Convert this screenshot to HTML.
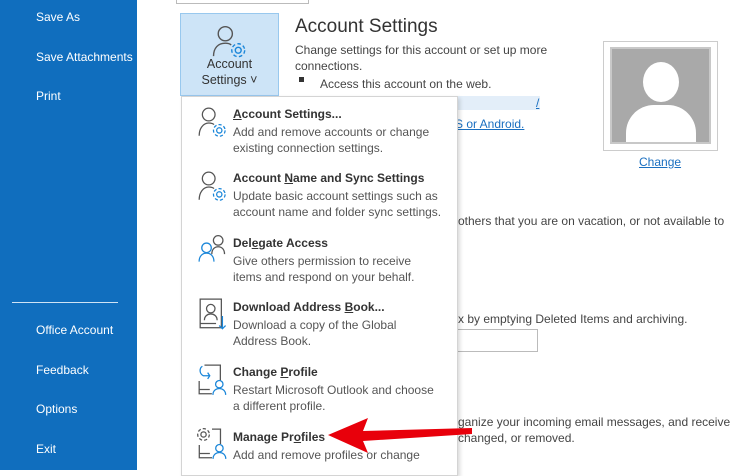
<!DOCTYPE html>
<html><head><style>
*{margin:0;padding:0;box-sizing:border-box}
body{width:730px;height:470px;overflow:hidden;background:#fff;font-family:"Liberation Sans",sans-serif;color:#444;position:relative;font-size:12px}
.a{position:absolute;white-space:nowrap}
#side{position:absolute;left:0;top:0;width:137px;height:470px;background:#106ebe}
#side .a{color:#fff;font-size:12px;left:36px}
.lnk{color:#1a6fc0;text-decoration:underline}
#menu{position:absolute;left:181px;top:96px;width:277px;height:380px;background:#fff;border:1px solid #d4d4d4;box-shadow:2px 2px 4px rgba(0,0,0,.15)}
.t{font-weight:bold;color:#333;font-size:12px}
.d{color:#555;font-size:12px;line-height:16px}
</style></head><body>
<div id="side">
<div class="a" style="top:10px">Save As</div>
<div class="a" style="top:50px">Save Attachments</div>
<div class="a" style="top:89px">Print</div>
<div style="position:absolute;left:12px;top:302px;width:106px;height:1px;background:#cfe3f5"></div>
<div class="a" style="top:323px">Office Account</div>
<div class="a" style="top:363px">Feedback</div>
<div class="a" style="top:402px">Options</div>
<div class="a" style="top:442px">Exit</div>
</div>
<div style="position:absolute;left:176px;top:0;width:133px;height:4px;border:1px solid #bbb;border-top:none"></div>
<div style="position:absolute;left:180px;top:13px;width:99px;height:83px;background:#cde4f7;border:1px solid #98c8ee"></div>
<svg class="a" style="left:210px;top:24px" width="40" height="36" viewBox="0 0 34 30" fill="none" stroke="#555" stroke-width="1.2">
<circle cx="13" cy="8" r="6"/><path d="M3 27c0-7 4-11 10-11 2 0 4 .5 5 1.5"/>
<circle cx="24" cy="22" r="2.5" stroke="#1a86d9"/><circle cx="24" cy="22" r="5.5" stroke="#1a86d9" stroke-dasharray="3 2"/></svg>
<div class="a" style="left:180px;width:99px;text-align:center;top:56px;color:#333;line-height:16px;font-size:12.5px">Account<br>Settings ˅</div>
<div class="a" style="left:295px;top:16px;font-size:19px;color:#333">Account Settings</div>
<div class="a" style="left:295px;top:42px;line-height:16px">Change settings for this account or set up more<br>connections.</div>
<div class="a" style="left:299px;top:77px;width:5px;height:5px;background:#333"></div>
<div class="a" style="left:320px;top:76px;line-height:16px">Access this account on the web.</div>
<div class="a" style="left:450px;top:96px;width:90px;height:14px;background:#e3eef9"></div>
<div class="a lnk" style="left:536px;top:96px">/</div>
<div class="a lnk" style="left:455px;top:117px">S or Android.</div>
<div class="a" style="left:603px;top:41px;width:115px;height:110px;border:1px solid #ccc;background:#fff"></div>
<div class="a" style="left:610px;top:47px;width:101px;height:97px;border:2px solid #c8c8c8;background:#a9a9a9;overflow:hidden">
<div style="position:absolute;left:31px;top:13px;width:36px;height:40px;border-radius:50%;background:#fff"></div>
<div style="position:absolute;left:14px;top:56px;width:70px;height:50px;border-radius:28px 28px 0 0;background:#fff"></div></div>
<div class="a lnk" style="left:639px;top:155px">Change</div>
<div class="a" style="left:458px;top:214px">others that you are on vacation, or not available to</div>
<div class="a" style="left:458px;top:312px">x by emptying Deleted Items and archiving.</div>
<div class="a" style="left:450px;top:329px;width:88px;height:23px;border:1px solid #bbb"></div>
<div class="a" style="left:458px;top:415px">ganize your incoming email messages, and receive</div>
<div class="a" style="left:458px;top:431px">changed, or removed.</div>
<div id="menu">
<svg class="a" style="left:14px;top:8px" width="36" height="36" viewBox="0 0 34 34" fill="none" stroke="#555" stroke-width="1.2"><circle cx="12" cy="9" r="6"/><path d="M3 29c0-7 4-12 9-12 2 0 4 .5 5 1.5"/><circle cx="22" cy="24" r="2.5" stroke="#1a86d9"/><circle cx="22" cy="24" r="5.5" stroke="#1a86d9" stroke-dasharray="3 2"/></svg>
<div class="a t" style="left:51px;top:10px"><u>A</u>ccount Settings...</div>
<div class="a d" style="left:51px;top:27px">Add and remove accounts or change<br>existing connection settings.</div>
<svg class="a" style="left:14px;top:72px" width="36" height="36" viewBox="0 0 34 34" fill="none" stroke="#555" stroke-width="1.2"><circle cx="12" cy="9" r="6"/><path d="M3 29c0-7 4-12 9-12 2 0 4 .5 5 1.5"/><circle cx="22" cy="24" r="2.5" stroke="#1a86d9"/><circle cx="22" cy="24" r="5.5" stroke="#1a86d9" stroke-dasharray="3 2"/></svg>
<div class="a t" style="left:51px;top:74px">Account <u>N</u>ame and Sync Settings</div>
<div class="a d" style="left:51px;top:91px">Update basic account settings such as<br>account name and folder sync settings.</div>
<svg class="a" style="left:15px;top:136px" width="36" height="36" viewBox="0 0 34 34" fill="none" stroke-width="1.2"><circle cx="20" cy="7" r="4.5" stroke="#555"/><path d="M14 20c0-5 3-7 6-7s6 2 6 7" stroke="#555"/><circle cx="9" cy="14" r="4.5" stroke="#1a86d9"/><path d="M2 27c0-5 3-8 7-8s7 3 7 8" stroke="#1a86d9"/></svg>
<div class="a t" style="left:51px;top:139px">Del<u>e</u>gate Access</div>
<div class="a d" style="left:51px;top:156px">Give others permission to receive<br>items and respond on your behalf.</div>
<svg class="a" style="left:15px;top:200px" width="36" height="36" viewBox="0 0 34 34" fill="none" stroke="#555" stroke-width="1.2"><rect x="3" y="2" width="20" height="27"/><path d="M3 25h15"/><circle cx="13" cy="11" r="4"/><path d="M7 22c0-4 3-6 6-6s6 2 6 6"/><path d="M24 18v12m-3-3 3 3 3-3" stroke="#1a86d9"/></svg>
<div class="a t" style="left:51px;top:203px">Download Address <u>B</u>ook...</div>
<div class="a d" style="left:51px;top:220px">Download a copy of the Global<br>Address Book.</div>
<svg class="a" style="left:14px;top:265px" width="36" height="36" viewBox="0 0 34 34" fill="none" stroke-width="1.2"><path d="M8 3h15v15M3 18v12h12M3 26h10" stroke="#555"/><path d="M6 4c-3 2-3 7 1 9h6m-2-3 2 3-2 3" stroke="#1a86d9"/><circle cx="22" cy="21" r="3.5" stroke="#1a86d9"/><path d="M16 31c0-4 3-6 6-6s6 2 6 6" stroke="#1a86d9"/></svg>
<div class="a t" style="left:51px;top:268px">Change <u>P</u>rofile</div>
<div class="a d" style="left:51px;top:285px">Restart Microsoft Outlook and choose<br>a different profile.</div>
<svg class="a" style="left:12px;top:329px" width="36" height="36" viewBox="0 0 34 34" fill="none" stroke-width="1.2"><circle cx="9" cy="8" r="2.5" stroke="#555"/><circle cx="9" cy="8" r="5.5" stroke="#555" stroke-dasharray="3 2"/><path d="M17 3h8v14M5 18v12h12M5 26h10" stroke="#555"/><circle cx="24" cy="21" r="3.5" stroke="#1a86d9"/><path d="M18 31c0-4 3-6 6-6s6 2 6 6" stroke="#1a86d9"/></svg>
<div class="a t" style="left:51px;top:333px">Manage Pr<u>o</u>files</div>
<div class="a d" style="left:51px;top:350px">Add and remove profiles or change</div>
</div>
<svg class="a" style="left:320px;top:414px" width="160" height="42" viewBox="0 0 160 42"><path d="M8 21 L48 4 L43 17 L152 14 L152 20 L43 27 L48 39 Z" fill="#e8000b"/></svg>
</body></html>
